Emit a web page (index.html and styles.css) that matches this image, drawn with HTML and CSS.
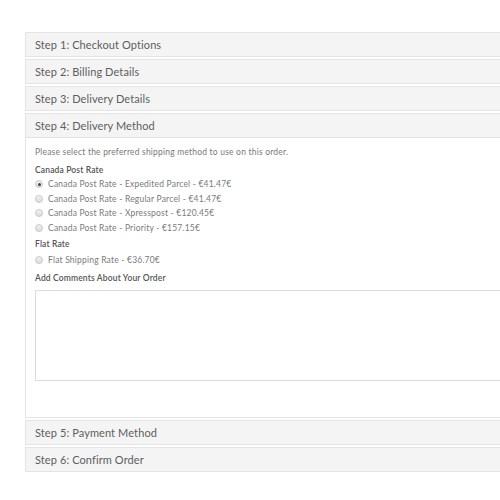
FILE: index.html
```html
<!DOCTYPE html>
<html lang="en">
<head>
<meta charset="utf-8">
<title>Checkout</title>
<link rel="stylesheet" href="styles.css">
</head>
<body>
<div class="checkout">
  <div class="panel"><div class="panel-heading">Step 1: Checkout Options</div></div>
  <div class="panel"><div class="panel-heading">Step 2: Billing Details</div></div>
  <div class="panel"><div class="panel-heading">Step 3: Delivery Details</div></div>
  <div class="panel">
    <div class="panel-heading">Step 4: Delivery Method</div>
    <div class="panel-body">
      <p class="intro">Please select the preferred shipping method to use on this order.</p>
      <p class="group-title">Canada Post Rate</p>
      <label class="option"><span class="radio checked"></span>Canada Post Rate - Expedited Parcel - €41.47€</label>
      <label class="option"><span class="radio"></span>Canada Post Rate - Regular Parcel - €41.47€</label>
      <label class="option"><span class="radio"></span>Canada Post Rate - Xpresspost - €120.45€</label>
      <label class="option"><span class="radio"></span>Canada Post Rate - Priority - €157.15€</label>
      <p class="group-title flat">Flat Rate</p>
      <label class="option flat-option"><span class="radio"></span>Flat Shipping Rate - €36.70€</label>
      <p class="group-title comments">Add Comments About Your Order</p>
      <textarea class="comment-box"></textarea>
    </div>
  </div>
  <div class="panel"><div class="panel-heading">Step 5: Payment Method</div></div>
  <div class="panel"><div class="panel-heading">Step 6: Confirm Order</div></div>
</div>
</body>
</html>
```

FILE: styles.css
```css
html, body {
  margin: 0;
  padding: 0;
  background: #fff;
  overflow: hidden;
}

body {
  font-family: "Lato", "Open Sans", sans-serif;
  color: #666;
}

.checkout {
  padding: 32px 0 0 25px;
  width: 560px;
}

.panel {
  border: 1px solid #e4e4e4;
  margin-bottom: 2px;
  background: #fff;
}

.panel-heading {
  background: #f4f4f4;
  height: 23px;
  line-height: 23px;
  padding-left: 9px;
  font-size: 11px;
  letter-spacing: 0.1px;
  color: #5e5e5e;
}

.panel-body {
  border-top: 1px solid #e4e4e4;
  padding: 8px 0 36px 9px;
  font-size: 8.5px;
}

.intro {
  margin: 0;
  line-height: 12px;
  color: #7a7a7a;
  letter-spacing: 0.2px;
}

.group-title {
  margin: 6px 0 0;
  line-height: 12px;
  font-weight: 600;
  color: #555;
  letter-spacing: 0.15px;
}

.group-title.flat { margin-top: 3px; }
.group-title.comments { margin-top: 4px; }

.option {
  display: flex;
  align-items: center;
  height: 14.5px;
  color: #7a7a7a;
  letter-spacing: 0.2px;
}

.option:first-of-type { margin-top: 1px; }
.flat-option { margin-top: 3px; }

.radio {
  width: 6px;
  height: 6px;
  border: 1px solid #c8c8c8;
  border-radius: 50%;
  background: linear-gradient(#f2f2f2, #dcdcdc);
  margin: 0 5px 0 0;
  position: relative;
  flex: none;
}

.radio.checked::after {
  content: "";
  position: absolute;
  left: 1.5px;
  top: 1.5px;
  width: 3px;
  height: 3px;
  border-radius: 50%;
  background: #444;
}

.comment-box {
  display: block;
  margin-top: 6px;
  width: 520px;
  height: 91px;
  box-sizing: border-box;
  border: 1px solid #dcdcdc;
  resize: none;
  padding: 0;
}
```
